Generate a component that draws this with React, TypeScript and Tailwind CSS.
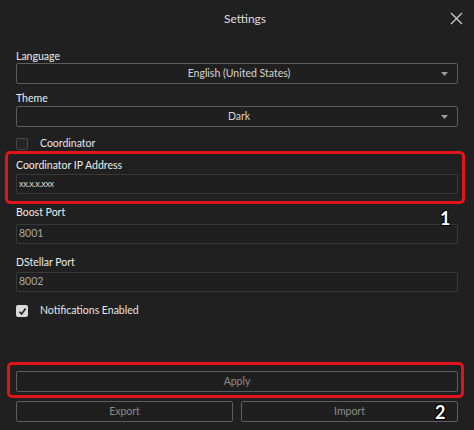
import React from "react";

const font = { fontFamily: 'Lato, "Open Sans", "Liberation Sans", sans-serif' };

function Caret() {
  return (
    <svg width="7" height="4" viewBox="0 0 7 4" className="shrink-0">
      <path d="M0 0 L7 0 L3.5 4 Z" fill="#9a9a9a" />
    </svg>
  );
}

function Select({ value }: { value: string }) {
  return (
    <div className="flex h-[21px] items-center rounded-[2px] border border-[#5c5c5c] bg-[#1f1f1f] pl-[20px] pr-[9px]">
      <span className="flex-1 text-center text-[10.5px] text-[#d6d6d6]">{value}</span>
      <Caret />
    </div>
  );
}

function Input({ value, small }: { value: string; small?: boolean }) {
  return (
    <div className="flex h-[20px] items-center rounded-[2px] border border-[#383838] bg-[#1f1f1f] px-[2px]">
      <span className={small ? "text-[9px] tracking-[-0.3px] text-[#dcdcdc]" : "text-[10.5px] text-[#a8a8a8]"}>
        {value}
      </span>
    </div>
  );
}

function Label({ children }: { children: React.ReactNode }) {
  return <div className="text-[10.5px] leading-[14px] text-[#ececec]">{children}</div>;
}

function Checkbox({ checked, label }: { checked?: boolean; label: string }) {
  return (
    <div className="flex h-[14px] items-center gap-[12px]">
      {checked ? (
        <div className="flex h-[12px] w-[12px] items-center justify-center rounded-[2px] bg-[#d9d9d9]">
          <svg width="9" height="9" viewBox="0 0 9 9">
            <path d="M1.5 4.8 L3.6 7 L7.6 1.6" fill="none" stroke="#202020" strokeWidth="1.6" />
          </svg>
        </div>
      ) : (
        <div className="h-[12px] w-[12px] rounded-[2px] border border-[#474747] bg-[#242424]" />
      )}
      <span className="text-[10.5px] text-[#e6e6e6]">{label}</span>
    </div>
  );
}

function Button({ children, className = "" }: { children: React.ReactNode; className?: string }) {
  return (
    <div
      className={
        "flex h-[21px] items-center justify-center rounded-[2px] border border-[#5e5e5e] bg-[#1f1f1f] text-[10.5px] text-[#8c8c8c] " +
        className
      }
    >
      {children}
    </div>
  );
}

function Badge({ n, className }: { n: string; className: string }) {
  return (
    <span
      className={"absolute text-[18px] font-bold leading-none text-white " + className}
      style={{ textShadow: "-1px -1px 0 #000, 1px -1px 0 #000, -1px 1px 0 #000, 1px 1px 0 #000, 0 0 2px #000" }}
    >
      {n}
    </span>
  );
}

export default function App() {
  return (
    <div className="relative h-[430px] w-[474px] overflow-hidden bg-[#202020]" style={font}>
      {/* Header */}
      <div className="flex h-[38px] items-center pl-[40px] pr-[11px]">
        <div className="flex-1 text-center text-[12px] text-[#dedede]">Settings</div>
        <svg width="13" height="13" viewBox="0 0 13 13" className="mb-[2px]">
          <path d="M1 1 L12 12 M12 1 L1 12" stroke="#d0d0d0" strokeWidth="1.2" />
        </svg>
      </div>

      <div className="flex flex-col px-[16px] pt-[11px]">
        <Label>Language</Label>
        <Select value="English (United States)" />
        <div className="mt-[7px]">
          <Label>Theme</Label>
        </div>
        <div className="mt-[1px]">
          <Select value="Dark" />
        </div>
        <div className="mt-[10px]">
          <Checkbox label="Coordinator" />
        </div>

        {/* highlight 1 */}
        <div className="-ml-[11px] -mr-[7px] mt-[0px] rounded-[5px] border-[3px] border-[#e0141a] pb-[7px] pl-[8px] pr-[4px] pt-[4px]">
          <Label>Coordinator IP Address</Label>
          <div className="mt-[2px]">
            <Input value="xx.x.x.xxx" small />
          </div>
        </div>

        <div className="mt-[1px]">
          <Label>Boost Port</Label>
        </div>
        <div className="mt-[5px]">
          <Input value="8001" />
        </div>
        <div className="mt-[11px]">
          <Label>DStellar Port</Label>
        </div>
        <div className="mt-[3px]">
          <Input value="8002" />
        </div>
        <div className="mt-[12px]">
          <Checkbox checked label="Notifications Enabled" />
        </div>

        {/* highlight 2 */}
        <div className="-ml-[9px] -mr-[6px] mt-[44px] rounded-[5px] border-[3px] border-[#e0141a] pb-[3px] pl-[6px] pr-[3px] pt-[6px]">
          <Button>Apply</Button>
        </div>
        <div className="mt-[3px] grid grid-cols-2 gap-[8px]">
          <Button>Export</Button>
          <Button>Import</Button>
        </div>
      </div>

      <Badge n="1" className="left-[440px] top-[209px]" />
      <Badge n="2" className="left-[435px] top-[403px]" />
    </div>
  );
}
